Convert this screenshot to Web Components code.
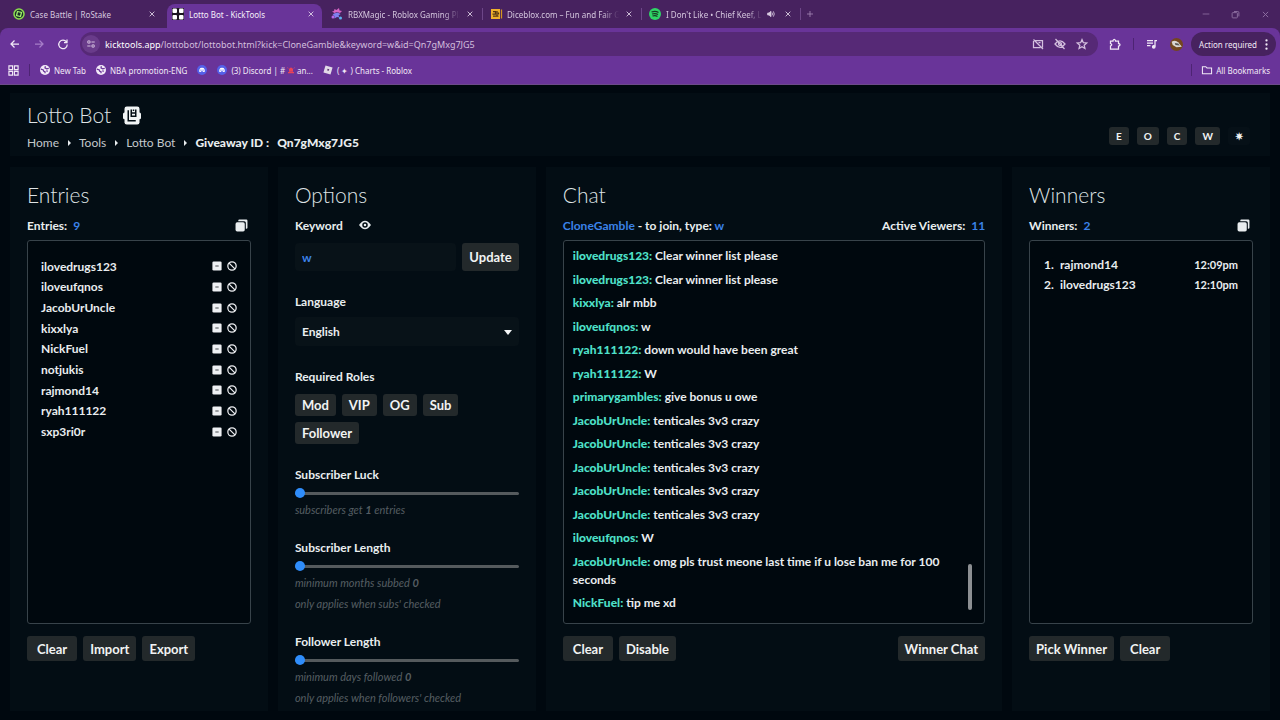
<!DOCTYPE html>
<html lang="en">
<head>
<meta charset="utf-8">
<title>Lotto Bot - KickTools</title>
<style>
  body { margin: 0; background: #00080f; color: #e9edef; font-family: Lato, "Noto Sans", sans-serif; font-size: 12px; font-weight: 700; }
</style>
</head>
<body>
<lotto-app></lotto-app>
<script>
const ICONS = {
  back: '<path d="M20 12H5M11 5l-7 7 7 7"/>',
  forward: '<path d="M4 12h15M13 5l7 7-7 7"/>',
  reload: '<path d="M19 8a8.500 8.500 0 1 0 1.500 5M20 3v6h-6"/>',
  tune: '<circle cx="7" cy="7" r="3"/><path d="M13 7h8M3 17h8"/><circle cx="17" cy="17" r="3"/>',
  close: '<path d="M5 5l14 14M19 5L5 19"/>',
  plus: '<path d="M12 3v18M3 12h18"/>',
  minimize: '<path d="M2 12h20"/>',
  restore: '<rect x="3" y="7" width="14" height="14" rx="2"/><path d="M8 4h10q3 0 3 3v10"/>',
  volume: '<path d="M2 9h4l6-5v16l-6-5H2z" fill="currentColor"/><path d="M16 8q3 4 0 8M19 4q6 8 0 16"/>',
  nocam: '<path d="M6 5h15v14M17 19H3V6M3 3l19 19M13 9h4"/>',
  noeye: '<path d="M2 12q10-13 20 0q-10 13-20 0zM3 2l18 20"/><circle cx="12" cy="12" r="3"/>',
  star: '<path d="M12 3l2.700 6.300 6.800.600-5.200 4.500 1.600 6.600-5.900-3.600L6.100 21l1.600-6.600L2.500 9.900l6.800-.600z"/>',
  puzzle: '<path d="M3 6h5V5q2.500-5 5 0v1h6v5h1q4 2.500 0 5h-1v6H3v-6q5-2.500 0-5z"/>',
  music: '<path d="M2 5h12M2 10h12M2 15h7M18 17V5h4"/><circle cx="15.500" cy="17.500" r="2.500" fill="currentColor"/>',
  more: '<g fill="currentColor" stroke="none"><circle cx="12" cy="3" r="2.500"/><circle cx="12" cy="12" r="2.500"/><circle cx="12" cy="21" r="2.500"/></g>',
  folder: '<path d="M1 4h8l3 3h11v14H1z"/>',
  apps: '<path d="M2 2h8v8H2zM14 2h8v8h-8zM2 14h8v8H2zM14 14h8v8h-8z"/>',
  avatar: '<g stroke="none"><circle cx="12" cy="12" r="12" fill="#74461f"/><path d="M3 7q7-4 12 1l7 8-10 1-7-4z" fill="#d8d5d2"/><path d="M9 9l6 1 3 4-8-1z" fill="#5a5654"/></g>',
  rostake: '<circle cx="12" cy="12" r="10" stroke="#8be04e" stroke-width="3" fill="#173026"/><path d="M9 7l8 2-2 8-8-2z" stroke="#a5f070"/>',
  kick: '<g stroke="none"><rect width="24" height="24" fill="#1b1420"/><g fill="#fff"><rect x="1" y="1" width="9" height="9" rx="2"/><rect x="14" y="1" width="9" height="9" rx="2"/><rect x="1" y="14" width="9" height="9" rx="2"/><rect x="14" y="14" width="9" height="9" rx="2"/></g></g>',
  magic: '<g stroke="none"><path d="M7 2l4 2 5-4 1 5 5 1-4 4-6-2-5 2-5-3 4-1z" fill="#d765c4"/><path d="M6 11l7-2 6 3-4 3 2 4-5-1-5 3v-5l-4-2z" fill="#7f80f0"/><circle cx="4" cy="18" r="3" fill="#b768ea"/><circle cx="19" cy="20" r="3" fill="#5cb3f0"/></g>',
  dice: '<g><path d="M2 2h18v20H2z" fill="#f0b02c" stroke="none"/><path d="M6 7h5v5H5M14 6v11M6 16h11M17 9v4" stroke="#553512"/><path d="M23 3v18" stroke="#d3961f"/></g>',
  spotify: '<circle cx="12" cy="12" r="12" fill="#2fd566" stroke="none"/><path d="M5 8q8-3 14 1M6 12q7-2 12 1M7 16q6-2 10 1" stroke="#173b24"/>',
  globe: '<circle cx="12" cy="12" r="12" fill="#f2e9f8" stroke="none"/><path d="M2 10l6 2 1 3 3 1v4M13 3l-1 4 4 2 5-1M15 14l4 1" stroke="#693499" stroke-width="3"/>',
  discord: '<circle cx="12" cy="12" r="12" fill="#5560e8" stroke="none"/><path d="M5 16q0-6 3-9 4-1 8 0 3 3 3 9l-4 1-1-2h-4l-1 2z" fill="#fff" stroke="none"/><circle cx="9.500" cy="12" r="1.500" fill="#5560e8" stroke="none"/><circle cx="14.500" cy="12" r="1.500" fill="#5560e8" stroke="none"/>',
  roblox: '<path d="M6 1l17 5-5 17-17-5z" fill="#e2dae8" stroke="none"/><path d="M11 9l4 1-1 4-4-1z" fill="#58356f" stroke="none"/>',
  siren: '<path d="M3 22h18v-4H3zM6 17V9q6-9 12 0v8z" fill="#ea4358" stroke="none"/><path d="M1 5l3 2M23 5l-3 2" stroke="#ea4358"/>',
  bot: '<g stroke="none"><rect x="2" y="0" width="20" height="24" rx="3" fill="#f1f4f5"/><rect x="0" y="8" width="24" height="9" rx="2" fill="#f1f4f5"/></g><path d="M7 5v14h10M11 4v9h6V4M11 8.500h6M14 4v2" stroke="#030d14" stroke-width="2"/>',
  copy: '<path d="M8 1h13q2 0 2 2v13q0 2-2 2h-1V7q0-3-3-3H6V3q0-2 2-2z" fill="currentColor" stroke="none"/><rect x="1" y="6" width="17" height="17" rx="3" fill="currentColor" stroke="none"/>',
  eye: '<path d="M0 12Q12-5 24 12Q12 29 0 12z" fill="currentColor" stroke="none"/><circle cx="12" cy="12" r="5.500" fill="#030d14" stroke="none"/><circle cx="12" cy="12" r="2.500" fill="currentColor" stroke="none"/>',
  minus: '<rect x="1" y="1" width="22" height="22" rx="3" fill="currentColor" stroke="none"/><path d="M8 12h8" stroke="#252a2e" stroke-width="2"/>',
  ban: '<circle cx="12" cy="12" r="10" stroke-width="3"/><path d="M5 5l14 14" stroke-width="3"/>'
};

function define(name, css, html) {
  customElements.define(name, class extends HTMLElement {
    connectedCallback() {
      if (this.shadowRoot) return;
      const root = this.attachShadow({ mode: "open" });
      root.innerHTML = `<style>*{box-sizing:border-box}${css}</style>${typeof html === "function" ? html(this) : html}`;
    }
  });
}

define("ui-icon", `
  :host { display: inline-flex; flex: none; width: 12px; height: 12px; }
  svg { width: 100%; height: 100%; overflow: visible; fill: none; stroke: currentColor; stroke-width: 2.5; }
`, el => `<svg viewBox="0 0 24 24" aria-hidden="true">${ICONS[el.getAttribute("name")]}</svg>`);

define("browser-tab", `
  :host { display: flex; align-items: center; gap: 5px; flex: 0 1 155px; min-width: 0; height: 24px; padding: 0 6px 4px 5px; position: relative; color: #d6c8df; box-sizing: border-box; }
  :host([active]) { background: #693499; color: #f5effa; border-radius: 8px 8px 0 0; }
  :host([divided])::after { content: ""; position: absolute; right: -2px; top: 4px; width: 1px; height: 12px; background: #6d4688; }
  span { flex: 1; min-width: 0; overflow: hidden; white-space: nowrap; }
  :host([fade]) span { mask-image: linear-gradient(90deg, #000 85%, transparent); }
  button { display: flex; padding: 1px; border: 0; background: none; color: #e5dbec; }
  button ui-icon { width: 8px; height: 8px; }
`, el => `<ui-icon name="${el.getAttribute("icon")}"></ui-icon><span><slot></slot></span>${el.hasAttribute("audio") ? '<ui-icon name="volume" style="width:8px;height:8px;margin-right:3px"></ui-icon>' : ""}<button aria-label="Close tab"><ui-icon name="close"></ui-icon></button>`);

define("browser-chrome", `
  :host { display: block; background: #47225f; color: #f1e9f6; font-family: "Noto Sans", "Open Sans", sans-serif; font-weight: 400; font-size: 8px; border-bottom: 1px solid #6d4b8a; }
  .tabs { display: flex; align-items: center; gap: 4px; height: 28px; padding: 4px 10px 0 8px; }
  .plus { margin-left: 3px; color: #a487b5; }
  .win { display: flex; gap: 21px; margin-left: auto; color: #8e6fa1; }
  .tabs > button, .win { padding-bottom: 4px; }
  button { display: flex; align-items: center; padding: 0; border: 0; background: none; color: inherit; font: inherit; }
  .bar { display: flex; align-items: center; height: 32px; padding: 0 4px 0 9px; background: #693499; border-radius: 8px 8px 0 0; }
  .nav { display: flex; gap: 12px; margin-right: 11px; }
  .nav button:nth-child(2) { color: #a67dc8; }
  .omni { display: flex; align-items: center; gap: 10px; flex: 1; height: 24px; padding: 0 10px 0 2px; border-radius: 12px; background: #562976; color: #d3bfde; }
  .site { width: 18px; height: 18px; justify-content: center; border-radius: 9px; background: #693b8a; }
  .site ui-icon { width: 10px; height: 10px; }
  .url { flex: 1; margin-left: -5px; font-size: 9px; }
  b { font-weight: 400; color: #fff; }
  .ext { display: flex; align-items: center; gap: 12px; margin-left: 11px; }
  i { width: 1px; height: 12px; background: #4d2473; }
  .ext button { margin-left: -4px; }
  .action { height: 24px; gap: 4px; padding: 0 4px 0 8px; border-radius: 12px; background: #47225f; }
  .action ui-icon { width: 11px; height: 11px; }
  .marks { display: flex; align-items: center; gap: 10px; height: 24px; padding: 0 10px 4px 8px; background: #693499; }
  a { display: flex; align-items: center; gap: 4px; color: inherit; text-decoration: none; }
  a ui-icon { width: 10px; height: 10px; }
  .all { margin-left: auto; }
  a .siren { width: 8px; margin: 0 -2px; }
`, `
  <div class="tabs">
    <browser-tab icon="rostake">Case Battle | RoStake</browser-tab>
    <browser-tab icon="kick" active>Lotto Bot - KickTools</browser-tab>
    <browser-tab icon="magic" fade divided>RBXMagic - Roblox Gaming Platform</browser-tab>
    <browser-tab icon="dice" fade divided>Diceblox.com – Fun and Fair Games</browser-tab>
    <browser-tab icon="spotify" fade divided audio>I Don't Like • Chief Keef, Lil Reese</browser-tab>
    <button class="plus" aria-label="New tab"><ui-icon name="plus" style="width:8px;height:8px"></ui-icon></button>
    <div class="win"><button aria-label="Minimize"><ui-icon name="minimize" style="width:8px"></ui-icon></button><button aria-label="Restore"><ui-icon name="restore" style="width:9px;height:9px"></ui-icon></button><button aria-label="Close"><ui-icon name="close" style="width:9px;height:9px"></ui-icon></button></div>
  </div>
  <div class="bar">
    <div class="nav"><button aria-label="Back"><ui-icon name="back"></ui-icon></button><button aria-label="Forward"><ui-icon name="forward"></ui-icon></button><button aria-label="Reload"><ui-icon name="reload"></ui-icon></button></div>
    <div class="omni"><button class="site" aria-label="Site information"><ui-icon name="tune"></ui-icon></button>
      <span class="url"><b>kicktools.app</b>/lottobot/lottobot.html?kick=CloneGamble&amp;keyword=w&amp;id=Qn7gMxg7JG5</span>
      <ui-icon name="nocam"></ui-icon><ui-icon name="noeye"></ui-icon><ui-icon name="star"></ui-icon></div>
    <div class="ext"><ui-icon name="puzzle"></ui-icon><i></i><ui-icon name="music"></ui-icon><ui-icon name="avatar" style="width:13px;height:13px"></ui-icon>
      <button class="action">Action required<ui-icon name="more"></ui-icon></button></div>
  </div>
  <nav class="marks" aria-label="Bookmarks">
    <ui-icon name="apps" style="width:11px;height:11px"></ui-icon><i></i>
    <a href="#"><ui-icon name="globe"></ui-icon>New Tab</a>
    <a href="#"><ui-icon name="globe"></ui-icon>NBA promotion-ENG</a>
    <a href="#" aria-label="Discord"><ui-icon name="discord"></ui-icon></a>
    <a href="#"><ui-icon name="discord"></ui-icon>(3) Discord | # <ui-icon class="siren" name="siren"></ui-icon> an...</a>
    <a href="#"><ui-icon name="roblox"></ui-icon>( ✦ ) Charts - Roblox</a>
    <i class="all"></i><a href="#"><ui-icon name="folder"></ui-icon>All Bookmarks</a>
  </nav>
`);

define("tool-button", `
  :host { display: inline-flex; height: 25px; }
  :host([size=role]) { height: 22px; }
  :host([size=field]) { height: 28px; }
  :host([size=key]) { height: 18px; }
  button { padding: 0 7px; border: 0; border-radius: 3px; background: #23292b; color: #f1f3f3; font: inherit; font-size: 13px; white-space: nowrap; }
  :host([size=key]) button { font-size: 10px; }
  :host([ghost]) button { background: #061017; }
  :host([wide]) button { padding: 0 10px; }
`, `<button><slot></slot></button>`);

define("page-header", `
  :host { display: flex; justify-content: space-between; padding: 8px 20px 4px 17px; background: #030d14; }
  h1 { display: flex; align-items: center; gap: 12px; margin: 0 0 5px; font-size: 21px; line-height: 28px; font-weight: 300; color: #dfe3e5; }
  h1 ui-icon { width: 18px; height: 19px; }
  nav { display: flex; align-items: center; line-height: 18px; }
  a { color: #c3c8cb; text-decoration: none; font-weight: 400; }
  s { width: 0; border: 3px solid transparent; border-left-color: #e9edef; border-right: 0; margin: 0 8px 0 9px; }
  b + b { margin-left: 8px; }
  .keys { display: flex; gap: 8px; align-items: center; padding-top: 18px; }
`, `
  <div><h1>Lotto Bot <ui-icon name="bot"></ui-icon></h1>
    <nav aria-label="Breadcrumb"><a href="#">Home</a><s></s><a href="#">Tools</a><s></s><a href="#">Lotto Bot</a><s></s><b>Giveaway ID :</b><b>Qn7gMxg7JG5</b></nav></div>
  <div class="keys"><tool-button size="key">E</tool-button><tool-button size="key">O</tool-button><tool-button size="key">C</tool-button><tool-button size="key">W</tool-button><tool-button size="key" ghost>✷</tool-button></div>
`);

define("tool-panel", `
  :host { display: flex; flex-direction: column; min-width: 0; padding: 14px 17px 50px; background: #030d14; }
  :host([open-end]) { padding-bottom: 0; }
  h2 { margin: 0; font-size: 21px; line-height: 28px; font-weight: 300; color: #dfe3e5; }
  .meta { display: flex; justify-content: space-between; align-items: center; height: 20px; margin: 6px 0 5px; white-space: nowrap; }
  ::slotted(.box) { flex: 1; min-height: 0; }
  ::slotted(.actions) { display: flex; gap: 6px; margin-top: 12px; }
`, el => `<h2>${el.getAttribute("heading")}</h2><div class="meta"><slot name="label"></slot><slot name="side"></slot></div><slot></slot>`);

const BOX = `border: 1px solid #38434a; border-radius: 3px; background: #00080e;`;

define("entry-list", `
  :host { display: block; ${BOX} padding: 15px 13px; }
  ul { display: grid; grid-auto-rows: 1fr; height: 186px; margin: 0; padding: 0; list-style: none; }
  li { display: flex; align-items: center; gap: 5px; }
  span { flex: 1; }
  button { display: flex; padding: 0; border: 0; background: none; color: #eef0f3; }
  ui-icon { width: 10px; height: 10px; }
`, `<ul>${["ilovedrugs123","iloveufqnos","JacobUrUncle","kixxlya","NickFuel","notjukis","rajmond14","ryah111122","sxp3ri0r"].map(n => `<li><span>${n}</span><button aria-label="Remove ${n}"><ui-icon name="minus"></ui-icon></button><button aria-label="Ban ${n}"><ui-icon name="ban"></ui-icon></button></li>`).join("")}</ul>`);

const CHAT = [
  ["ilovedrugs123","Clear winner list please"],["ilovedrugs123","Clear winner list please"],["kixxlya","alr mbb"],["iloveufqnos","w"],
  ["ryah111122","down would have been great"],["ryah111122","W"],["primarygambles","give bonus u owe"],
  ...Array(5).fill(["JacobUrUncle","tenticales 3v3 crazy"]),
  ["iloveufqnos","W"],["JacobUrUncle","omg pls trust meone last time if u lose ban me for 100 seconds"],["NickFuel","tip me xd"]
];
define("chat-log", `
  :host { display: flex; flex-direction: column; justify-content: space-between; position: relative; ${BOX} padding: 6px 28px 11px 9px; }
  p { margin: 0; line-height: 18px; }
  b { color: #4ee0c9; }
  .thumb { position: absolute; right: 12px; bottom: 13px; width: 4px; height: 46px; border-radius: 2px; background: #8c8f92; }
`, CHAT.map(([n, t]) => `<p><b>${n}:</b> ${t}</p>`).join("") + `<div class="thumb"></div>`);

define("winner-list", `
  :host { display: block; ${BOX} padding: 14px 14px; }
  ol { margin: 0; padding: 0; list-style: none; }
  li { display: flex; line-height: 20px; }
  span { margin-left: 6px; flex: 1; }
  time { font-size: 11px; }
`, `<ol><li>1.<span>rajmond14</span><time>12:09pm</time></li><li>2.<span>ilovedrugs123</span><time>12:10pm</time></li></ol>`);

define("range-field", `
  :host { display: block; }
  label { display: block; line-height: 18px; }
  input { display: block; appearance: none; width: 100%; height: 10px; margin: 4px 0 1px; background: none; }
  input::-webkit-slider-runnable-track { height: 3px; background: #555a5d; border-radius: 2px; }
  input::-webkit-slider-thumb { appearance: none; width: 10px; height: 10px; margin-top: -4px; border-radius: 5px; background: #2f8dfb; }
  .hint { font-size: 11px; font-weight: 400; font-style: italic; color: #555d62; line-height: 21px; }
`, el => `<label for="r">${el.getAttribute("label")}</label><input id="r" type="range" min="0" max="24" value="0"><div class="hint"><slot></slot></div>`);

define("options-form", `
  :host { display: block; }
  .row { display: flex; gap: 6px; margin-top: 3px; }
  input { flex: 1; min-width: 0; height: 28px; padding: 0 7px; border: 0; border-radius: 4px; background: #081218; color: #3b82e8; font: inherit; }
  .lang, .title { display: block; line-height: 18px; }
  .lang { margin-top: 22px; }
  .pick { position: relative; margin-top: 6px; }
  select { appearance: none; width: 100%; height: 29px; padding: 0 7px; border: 0; border-radius: 4px; background: #081218; color: #e9edef; font: inherit; }
  .pick::after { content: ""; position: absolute; right: 7px; top: 13px; border: 4px solid transparent; border-top: 5px solid #f4f6f7; border-bottom: 0; pointer-events: none; }
  .title { margin-top: 22px; }
  .roles { display: flex; flex-wrap: wrap; gap: 6px; margin: 8px 40px 22px 0; }
  .fields { display: grid; gap: 19px; }
`, `
  <div class="row"><input aria-label="Keyword" value="w"><tool-button size="field">Update</tool-button></div>
  <label class="lang" for="lang">Language</label>
  <div class="pick"><select id="lang"><option>English</option></select></div>
  <span class="title">Required Roles</span>
  <div class="roles"><tool-button size="role">Mod</tool-button><tool-button size="role">VIP</tool-button><tool-button size="role">OG</tool-button><tool-button size="role">Sub</tool-button><tool-button size="role">Follower</tool-button></div>
  <div class="fields">
    <range-field label="Subscriber Luck">subscribers get <b>1</b> entries</range-field>
    <range-field label="Subscriber Length">minimum months subbed <b>0</b><br>only applies when subs' checked</range-field>
    <range-field label="Follower Length">minimum days followed <b>0</b><br>only applies when followers' checked</range-field>
  </div>
`);

define("lotto-app", `
  :host { display: flex; flex-direction: column; min-height: 100vh; }
  page-header { margin: 8px 10px 11px; }
  main { flex: 1; display: grid; grid-template-columns: 13fr 13fr 23fr 13fr; gap: 10px; padding: 0 10px 9px; }
  em { font-style: normal; color: #3b82e8; margin-left: 3px; }
  .join em { margin: 0; }
  .copy { width: 13px; height: 13px; margin-right: 3px; }
  .key { display: flex; align-items: center; gap: 16px; }
  .end { margin-left: auto; }
`, `
  <browser-chrome></browser-chrome>
  <page-header></page-header>
  <main>
    <tool-panel heading="Entries"><span slot="label">Entries: <em>9</em></span><ui-icon class="copy" slot="side" name="copy"></ui-icon>
      <entry-list class="box"></entry-list>
      <div class="actions"><tool-button wide>Clear</tool-button><tool-button>Import</tool-button><tool-button>Export</tool-button></div></tool-panel>
    <tool-panel heading="Options" open-end><span class="key" slot="label">Keyword <ui-icon name="eye"></ui-icon></span>
      <options-form></options-form></tool-panel>
    <tool-panel heading="Chat"><span class="join" slot="label"><em>CloneGamble</em> - to join, type: <em>w</em></span><span slot="side">Active Viewers: <em>11</em></span>
      <chat-log class="box"></chat-log>
      <div class="actions"><tool-button wide>Clear</tool-button><tool-button>Disable</tool-button><tool-button class="end">Winner Chat</tool-button></div></tool-panel>
    <tool-panel heading="Winners"><span slot="label">Winners: <em>2</em></span><ui-icon class="copy" slot="side" name="copy"></ui-icon>
      <winner-list class="box"></winner-list>
      <div class="actions"><tool-button>Pick Winner</tool-button><tool-button wide>Clear</tool-button></div></tool-panel>
  </main>
`);
</script>
</body>
</html>
